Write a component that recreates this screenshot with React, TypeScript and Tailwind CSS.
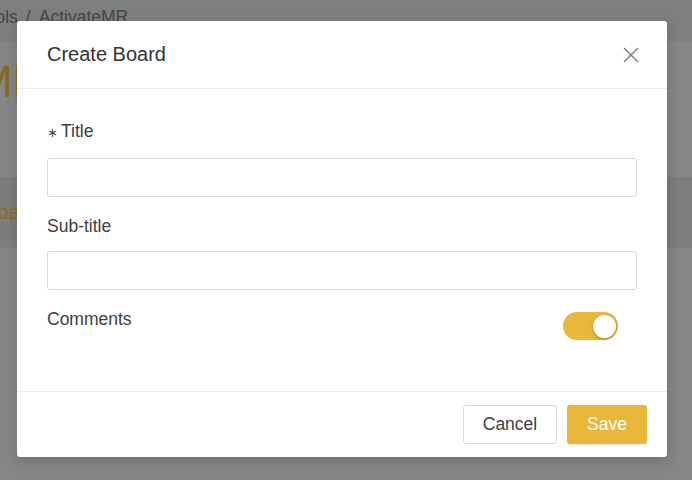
import { useState } from "react";

export default function App() {
  const [comments, setComments] = useState(true);
  const [title, setTitle] = useState("");
  const [subTitle, setSubTitle] = useState("");

  return (
    <div
      className="relative w-[692px] h-[480px] overflow-hidden bg-[#868686]"
      style={{ fontFamily: '"Liberation Sans", Arial, sans-serif' }}
    >
      {/* page behind the overlay */}
      <div className="h-[42px] bg-[#7e807f] flex items-start pt-[4px] text-[17.5px] text-[#454545] whitespace-nowrap">
        <span className="ml-[-23px]">Tools</span>
        <span className="mx-[8px]">/</span>
        <span>ActivateMR</span>
      </div>
      <div className="h-[135px] flex items-start pt-[18px]">
        <span className="ml-[-24px] text-[44px] leading-none text-[#86691f]">MR</span>
      </div>
      <div className="h-[71px] bg-[#7d7d7d] flex items-center border-b border-[#808080]">
        <span className="ml-[-3px] text-[21px] text-[#8a6c20]">ba</span>
      </div>

      {/* modal */}
      <div className="absolute left-[17px] top-[21px] w-[650px] h-[436px] bg-white rounded-[3px] shadow-[0_4px_14px_rgba(0,0,0,0.18)] flex flex-col">
        <div className="h-[68px] px-[30px] flex items-center justify-between border-b border-[#ececec]">
          <h2 className="text-[20px] text-[#333333] mt-[-2px]">Create Board</h2>
          <button type="button" className="mr-[-6px] p-1 text-[#7a7a7a]">
            <svg width="16" height="16" viewBox="0 0 16 16" fill="none" stroke="currentColor" strokeWidth="1.4">
              <path d="M1 1 L15 15 M15 1 L1 15" />
            </svg>
          </button>
        </div>

        <div className="h-[302px] px-[30px] pt-[30px] flex flex-col">
          <label className="h-[24px] leading-[24px] text-[17.5px] text-[#404040] flex items-center">
            <span
              className="w-[14px] text-[13px] text-[#444444] pt-[3px]"
              style={{ fontFamily: '"DejaVu Sans", sans-serif' }}
            >
              ∗
            </span>
            Title
          </label>
          <input
            value={title}
            onChange={(e) => setTitle(e.target.value)}
            className="mt-[15px] h-[39px] w-[590px] border border-[#d9d9d9] rounded-[3px] px-3 text-[16px] outline-none"
          />
          <label className="mt-[17px] h-[24px] leading-[24px] text-[17.5px] text-[#404040]">Sub-title</label>
          <input
            value={subTitle}
            onChange={(e) => setSubTitle(e.target.value)}
            className="mt-[13px] h-[39px] w-[590px] border border-[#d9d9d9] rounded-[3px] px-3 text-[16px] outline-none"
          />
          <div className="mt-[17px] flex items-start justify-between">
            <span className="h-[24px] leading-[24px] text-[17.5px] text-[#404040]">Comments</span>
            <button
              type="button"
              onClick={() => setComments(!comments)}
              className={`mt-[5px] mr-[19px] w-[55px] h-[28px] rounded-full flex items-center px-[2px] ${
                comments ? "bg-[#e9b73a] justify-end" : "bg-[#cccccc] justify-start"
              }`}
            >
              <span className="w-[23px] h-[23px] rounded-full bg-white shadow-[0_1px_3px_rgba(0,0,0,0.3)]" />
            </button>
          </div>
        </div>

        <div className="flex-1 border-t border-[#ececec] flex items-start justify-end gap-[10px] pt-[13px] pr-[20px]">
          <button
            type="button"
            className="w-[94px] h-[39px] border border-[#d9d9d9] rounded-[3px] bg-white text-[17.5px] text-[#404040]"
          >
            Cancel
          </button>
          <button
            type="button"
            className="w-[80px] h-[39px] rounded-[3px] bg-[#e9b73a] text-[17.5px] text-white shadow-[0_1px_2px_rgba(0,0,0,0.1)]"
          >
            Save
          </button>
        </div>
      </div>
    </div>
  );
}
